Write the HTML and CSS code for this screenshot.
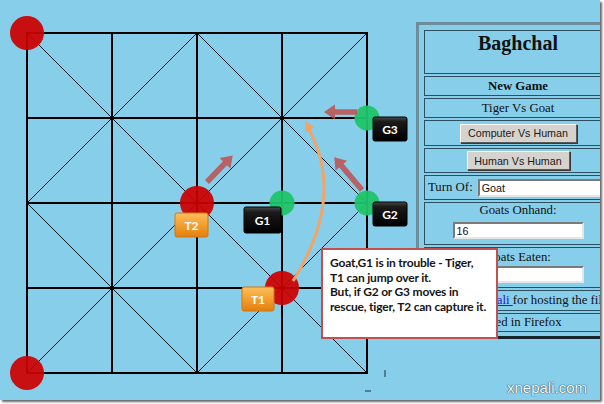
FILE: index.html
```html
<!DOCTYPE html>
<html>
<head>
<meta charset="utf-8">
<title>Baghchal</title>
<link rel="stylesheet" href="styles.css">
</head>
<body>
<div class="shot">
  <svg class="board" width="416" height="400" viewBox="0 0 416 400">
    <defs>
      <linearGradient id="blk" x1="0" y1="0" x2="0" y2="1">
        <stop offset="0" stop-color="#4a4a4a"/>
        <stop offset="0.2" stop-color="#1a1a1a"/>
        <stop offset="1" stop-color="#000"/>
      </linearGradient>
      <linearGradient id="org" x1="0" y1="0" x2="0" y2="1">
        <stop offset="0" stop-color="#fbbf5a"/>
        <stop offset="0.45" stop-color="#f5a233"/>
        <stop offset="1" stop-color="#e27f0e"/>
      </linearGradient>
    </defs>
    <g stroke="#0c1a20" stroke-width="1">
      <line x1="27" y1="33" x2="367" y2="373"/>
      <line x1="367" y1="33" x2="27" y2="373"/>
      <line x1="197" y1="33" x2="27" y2="203"/>
      <line x1="197" y1="33" x2="367" y2="203"/>
      <line x1="27" y1="203" x2="197" y2="373"/>
      <line x1="367" y1="203" x2="197" y2="373"/>
    </g>
    <g stroke="#000" stroke-width="2" stroke-linecap="square">
      <line x1="27" y1="33" x2="27" y2="373"/>
      <line x1="112" y1="33" x2="112" y2="373"/>
      <line x1="197" y1="33" x2="197" y2="373"/>
      <line x1="282" y1="33" x2="282" y2="373"/>
      <line x1="367" y1="33" x2="367" y2="373"/>
      <line x1="27" y1="33" x2="367" y2="33"/>
      <line x1="27" y1="118" x2="367" y2="118"/>
      <line x1="27" y1="203" x2="367" y2="203"/>
      <line x1="27" y1="288" x2="367" y2="288"/>
      <line x1="27" y1="373" x2="367" y2="373"/>
    </g>
    <g fill="#000">
      <circle cx="112" cy="118" r="2"/>
      <circle cx="282" cy="118" r="2"/>
      <circle cx="197" cy="203" r="2"/>
      <circle cx="112" cy="288" r="2"/>
      <circle cx="282" cy="288" r="2"/>
    </g>
    <g fill="#cc0000" opacity="0.93">
      <circle cx="27" cy="33" r="17"/>
      <circle cx="27" cy="373" r="17"/>
      <circle cx="197" cy="203" r="17"/>
      <circle cx="282" cy="288" r="17"/>
    </g>
    <g fill="#1fc46b" opacity="0.95">
      <circle cx="282" cy="203" r="12.5"/>
      <circle cx="367" cy="118" r="12.5"/>
      <circle cx="367" cy="203" r="12.5"/>
    </g>
    <g fill="#c0504d" opacity="0.85">
      <polygon transform="translate(207,182) rotate(-46)" points="0,-2.8 26,-2.8 26,-7.5 37,0 26,7.5 26,2.8 0,2.8"/>
      <polygon transform="translate(362,190) rotate(-130.3)" points="0,-2.8 32,-2.8 32,-7.5 43,0 32,7.5 32,2.8 0,2.8"/>
      <polygon transform="translate(357,112) rotate(180)" points="0,-2.8 22,-2.8 22,-7.5 33,0 22,7.5 22,2.8 0,2.8"/>
    </g>
    <path d="M293,281 Q347,195 307,126" fill="none" stroke="#f2a366" stroke-width="3"/>
    <polygon transform="translate(305,121) rotate(-119.7)" points="0,0 -10,-5 -10,5" fill="#f2a366"/>
    <g class="lbl">
      <rect x="244" y="207" width="37" height="26" rx="2" fill="url(#blk)" stroke="#000"/>
      <text x="262.5" y="220.5">G1</text>
      <rect x="373" y="117" width="34" height="24" rx="2" fill="url(#blk)" stroke="#000"/>
      <text x="390" y="129.5">G3</text>
      <rect x="373" y="202" width="34" height="24" rx="2" fill="url(#blk)" stroke="#000"/>
      <text x="390" y="214.5">G2</text>
      <rect x="175" y="213" width="33" height="24" rx="2" fill="url(#org)" stroke="#d4760c"/>
      <text x="191.5" y="225.5">T2</text>
      <rect x="242" y="287" width="32" height="24" rx="2" fill="url(#org)" stroke="#d4760c"/>
      <text x="258" y="299.5">T1</text>
    </g>
    <g stroke="#3d6474" stroke-width="1.5">
      <line x1="385" y1="370" x2="385" y2="377"/>
      <line x1="365" y1="391" x2="371" y2="391"/>
    </g>
  </svg>

  <div class="panel">
    <div class="cell title">Baghchal</div>
    <div class="cell newgame">New Game</div>
    <div class="cell plain">Tiger Vs Goat</div>
    <div class="cell btnrow"><button class="btn btn-cvh">Computer Vs Human</button></div>
    <div class="cell btnrow2"><button class="btn btn-hvh">Human Vs Human</button></div>
    <div class="cell turn"><span class="turn-label">Turn Of:</span><input class="field field-wide" value="Goat"></div>
    <div class="cell stack"><span class="stack-label">Goats Onhand:</span><input class="field" value="16"></div>
    <div class="cell stack eaten"><span class="stack-label">Goats Eaten:</span><input class="field" value=""></div>
    <div class="cell thanks">Thanks xnep<a class="link" href="#">ali </a>for hosting the file</div>
    <div class="cell tested">Tested in Firefox</div>
  </div>

  <div class="callout">
    <div class="cl">Goat,G1 is in trouble - Tiger,</div>
    <div class="cl">T1 can jump over it.</div>
    <div class="cl">But, if G2 or G3 moves in</div>
    <div class="cl">rescue, tiger, T2 can capture it.</div>
  </div>

  <div class="watermark">xnepali.com</div>
</div>
</body>
</html>
```

FILE: styles.css
```css
html, body {
  margin: 0;
  padding: 0;
}

body {
  width: 604px;
  height: 404px;
  background: #ffffff;
  overflow: hidden;
}

.shot {
  position: relative;
  width: 600px;
  height: 400px;
  background: #87ceeb;
  overflow: hidden;
  display: flex;
  align-items: flex-start;
  box-shadow: 2px 2px 2px rgba(0, 0, 0, 0.6);
}

.board {
  display: block;
  flex: none;
}

.lbl text {
  font-family: "Lato", "Open Sans", sans-serif;
  font-weight: 700;
  font-size: 12px;
  fill: #ffffff;
  text-anchor: middle;
  dominant-baseline: central;
}

.panel {
  flex: none;
  width: 188px;
  margin-top: 22px;
  border: 3px solid;
  border-color: #6d8d9b #16252b #16252b #6d8d9b;
  padding: 5px 5px 4px 5px;
  display: flex;
  flex-direction: column;
  gap: 2px;
  font-family: "Liberation Serif", "Times New Roman", serif;
  font-size: 12.8px;
  color: #111111;
}

.cell {
  box-sizing: border-box;
  border: 1px solid #2d5061;
  display: flex;
  align-items: center;
  justify-content: center;
  white-space: nowrap;
}

.title {
  height: 44px;
  align-items: flex-start;
  padding-top: 1px;
  font-size: 20px;
  line-height: 23px;
  font-weight: 700;
}

.newgame {
  height: 20px;
  font-weight: 700;
}

.plain {
  height: 20px;
}

.btnrow {
  height: 26px;
}

.btnrow2 {
  height: 25px;
}

.btn {
  box-sizing: border-box;
  height: 19px;
  padding: 0;
  margin: 0;
  font-family: "Liberation Sans", Arial, sans-serif;
  font-size: 10.7px;
  color: #1a1a1a;
  background: #d6d3ce;
  border: 1px solid;
  border-color: #ffffff #5a5a5a #5a5a5a #ffffff;
  box-shadow: 1px 1px 0 #3a3a3a;
}

.btn-cvh {
  width: 117px;
}

.btn-hvh {
  width: 103px;
}

.turn {
  height: 25px;
  justify-content: flex-start;
  padding-left: 3px;
  gap: 5px;
}

.field {
  box-sizing: border-box;
  width: 131px;
  height: 17px;
  margin: 0;
  padding: 0 2px;
  border: 2px solid;
  border-color: #7a7a7a #e6e6e6 #e6e6e6 #7a7a7a;
  background: #ffffff;
  font-family: "Liberation Sans", Arial, sans-serif;
  font-size: 10.7px;
  color: #111111;
  outline: none;
}

.field-wide {
  width: 150px;
  height: 18px;
  flex: none;
}

.stack {
  height: 43px;
  flex-direction: column;
  justify-content: flex-start;
  gap: 4px;
}

.stack-label {
  line-height: 15px;
}

.stack.eaten {
  height: 41px;
  padding-top: 2px;
  gap: 1px;
}

.thanks {
  display: block;
  height: 21px;
  line-height: 19px;
  padding-left: 6px;
  overflow: hidden;
}

.link {
  color: #2424c8;
  text-decoration: underline;
}

.tested {
  height: 19px;
}

.callout {
  position: absolute;
  left: 321px;
  top: 248px;
  width: 177px;
  height: 91px;
  box-sizing: border-box;
  border: 2px solid #bf5250;
  background: #ffffff;
  padding: 6px 0 0 7px;
  font-family: "Lato", "Open Sans", sans-serif;
  font-weight: 700;
  font-size: 12px;
  letter-spacing: -0.2px;
  line-height: 14.5px;
  color: #151515;
  overflow: hidden;
}

.cl {
  white-space: nowrap;
}

.watermark {
  position: absolute;
  left: 507px;
  top: 379px;
  font-family: "Liberation Sans", Arial, sans-serif;
  font-size: 15px;
  line-height: 17px;
  color: #f4f9fc;
  text-shadow: 0 0 1px #2a3a40, 0 0 1px #2a3a40;
}
```
